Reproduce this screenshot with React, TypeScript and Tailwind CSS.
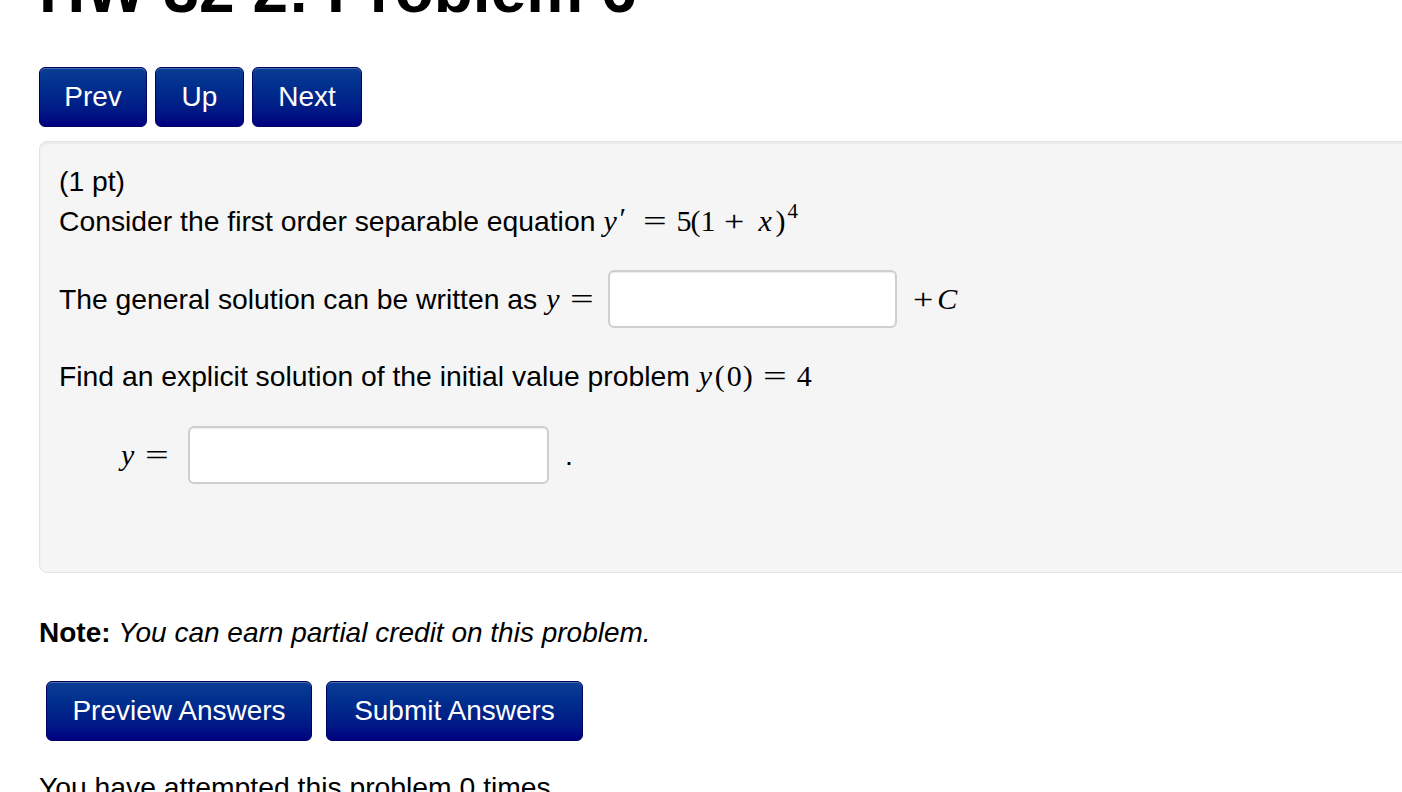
import React from "react";

const serif = "font-['Liberation_Serif','Times_New_Roman',serif]";

function NavButton({ label, width }: { label: string; width: string }) {
  return (
    <button
      type="button"
      className={`${width} h-[60px] rounded-[6px] border border-[#00005e] bg-linear-to-b from-[#0c3d94] to-[#000080] text-[28px] leading-none text-white shadow-[inset_0_1px_0_rgba(255,255,255,0.25)]`}
    >
      {label}
    </button>
  );
}

function AnswerBox({ width }: { width: string }) {
  return (
    <input
      type="text"
      aria-label="answer"
      className={`${width} h-[58px] rounded-[6px] border-2 border-[#cfcfcf] bg-white px-3 text-[28px] shadow-[inset_0_1px_1px_rgba(0,0,0,0.075)] outline-none`}
    />
  );
}

function G({ w, children }: { w: string; children: React.ReactNode }) {
  return <span className={`inline-block ${w}`}>{children}</span>;
}

function Eq() {
  return <span className="inline-block origin-left scale-x-[1.4]">=</span>;
}

function Plus() {
  return <span className="inline-block origin-left scale-x-[1.2]">+</span>;
}

export default function App() {
  return (
    <div className="h-[792px] overflow-hidden bg-white font-['Liberation_Sans',Arial,sans-serif] text-[28.3px] text-black">
      <div className="pl-[39px]">
        <h1 className="mt-[-42px] text-[64px] font-bold leading-none whitespace-nowrap">
          HW 32 2: Problem 6
        </h1>

        <div className="mt-[45px] flex gap-2">
          <NavButton label="Prev" width="w-[108px]" />
          <NavButton label="Up" width="w-[89px]" />
          <NavButton label="Next" width="w-[110px]" />
        </div>

        <div className="-mr-[40px] mt-[14px] rounded-[8px] border border-[#e3e3e3] bg-[#f5f5f5] pb-[88px] pl-[19px] pt-[19px] leading-[40px] shadow-[inset_0_2px_2px_rgba(0,0,0,0.05)]">
          <div className="h-[40px]">(1 pt)</div>

          <div className="h-[40px] whitespace-nowrap">
            Consider the first order separable equation
            <span className={`${serif} ml-[8px] text-[30px] leading-none`}>
              <G w="w-[16px]">
                <i>y</i>
              </G>
              <G w="w-[24px]">
                <span className="relative top-[-3px]">′</span>
              </G>
              <G w="w-[33px]">
                <Eq />
              </G>
              <G w="w-[14px]">5</G>
              <G w="w-[10px]">(</G>
              <G w="w-[24px]">1</G>
              <G w="w-[34px]">
                <Plus />
              </G>
              <G w="w-[17px]">
                <i>x</i>
              </G>
              <G w="w-[12px]">)</G>
              <span className="relative top-[-13px] text-[21px]">4</span>
            </span>
          </div>

          <div className="mt-[29px] flex h-[58px] items-center whitespace-nowrap">
            <span>The general solution can be written as</span>
            <span className={`${serif} ml-[9px] text-[30px] leading-none`}>
              <G w="w-[24px]">
                <i>y</i>
              </G>
              <G w="w-[38px]">
                <Eq />
              </G>
            </span>
            <AnswerBox width="w-[289px]" />
            <span className={`${serif} ml-[16px] text-[30px] leading-none`}>
              <G w="w-[24px]">
                <Plus />
              </G>
              <i>C</i>
            </span>
          </div>

          <div className="mt-[28px] h-[40px] whitespace-nowrap">
            Find an explicit solution of the initial value problem
            <span className={`${serif} ml-[9px] text-[30px] leading-none`}>
              <G w="w-[16px]">
                <i>y</i>
              </G>
              <G w="w-[12px]">(</G>
              <G w="w-[16px]">0</G>
              <G w="w-[20px]">)</G>
              <G w="w-[34px]">
                <Eq />
              </G>
              4
            </span>
          </div>

          <div className="mt-[30px] flex h-[58px] items-center whitespace-nowrap pl-[62px]">
            <span className={`${serif} text-[30px] leading-none`}>
              <G w="w-[24px]">
                <i>y</i>
              </G>
              <G w="w-[43px]">
                <Eq />
              </G>
            </span>
            <AnswerBox width="w-[361px]" />
            <span className="ml-[16px]">.</span>
          </div>
        </div>

        <p className="mt-[40px] h-[40px] text-[28px] leading-[40px] whitespace-nowrap">
          <b>Note:</b> <i>You can earn partial credit on this problem.</i>
        </p>

        <div className="mt-[28px] flex gap-[14px] pl-[7px]">
          <NavButton label="Preview Answers" width="w-[266px]" />
          <NavButton label="Submit Answers" width="w-[257px]" />
        </div>

        <p className="mt-[26px] leading-[40px] whitespace-nowrap">
          You have attempted this problem 0 times.
        </p>
      </div>
    </div>
  );
}
